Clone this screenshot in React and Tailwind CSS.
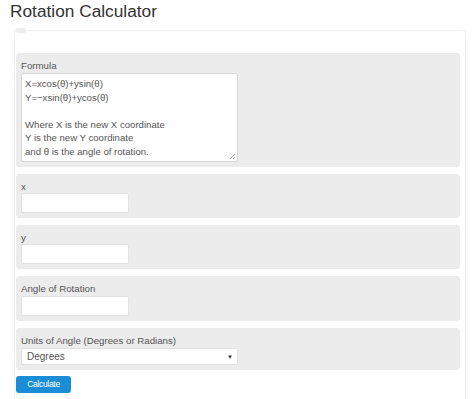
export default function App() {
  const font = { fontFamily: '"Liberation Sans", Arial, sans-serif' };
  const lines = [
    "X=xcos(θ)+ysin(θ)",
    "Y=−xsin(θ)+ycos(θ)",
    "\u00a0",
    "Where X is the new X coordinate",
    "Y is the new Y coordinate",
    "and θ is the angle of rotation.",
  ];
  return (
    <div className="w-[474px] h-[399px] bg-white overflow-hidden" style={font}>
      <h1 className="pl-[10px] text-[17.3px] leading-[23px] text-[#333]">Rotation Calculator</h1>
      <div className="relative ml-[14px] mt-[7px] w-[452px] h-[400px] border border-[#f0f0f0] rounded-[3px] pl-[1px] pr-[5px] pt-[22px]">
        <div className="absolute left-[1px] top-[-3px] w-[10px] h-[5px] rounded-[2px] bg-[#ececec]" />
        <div className="flex flex-col gap-[7px]">
          <div className="bg-[#ececec] rounded-[3px] pt-[6px] pb-[5px] px-[5px] h-[114px]">
            <div className="text-[9.7px] leading-[13px] text-[#555]">Formula</div>
            <div className="relative mt-[1px] w-[217px] h-[89px] bg-white border border-[#d6d6d6] rounded-[2px] pl-[3px] pt-[3px] text-[9.6px] leading-[13.6px] text-[#555]">
              {lines.map((l, i) => (
                <div key={i} className="whitespace-pre">{l}</div>
              ))}
              <svg className="absolute right-[1px] bottom-[1px]" width="7" height="7" viewBox="0 0 7 7">
                <path d="M6 1 L1 6 M6 4 L4 6" stroke="#999" strokeWidth="0.8" />
              </svg>
            </div>
          </div>
          <div className="bg-[#ececec] rounded-[3px] pt-[6px] pb-[5px] px-[5px] h-[44px]">
            <div className="text-[9.7px] leading-[13px] text-[#555]">x</div>
            <input className="block w-[108px] h-[20px] bg-white border border-[#e2e2e2] rounded-[2px] outline-none" />
          </div>
          <div className="bg-[#ececec] rounded-[3px] pt-[6px] pb-[5px] px-[5px] h-[44px]">
            <div className="text-[9.7px] leading-[13px] text-[#555]">y</div>
            <input className="block w-[108px] h-[20px] bg-white border border-[#e2e2e2] rounded-[2px] outline-none" />
          </div>
          <div className="bg-[#ececec] rounded-[3px] pt-[6px] pb-[5px] px-[5px] h-[45px]">
            <div className="text-[9.7px] leading-[13px] text-[#555]">Angle of Rotation</div>
            <input className="block mt-[1px] w-[108px] h-[20px] bg-white border border-[#e2e2e2] rounded-[2px] outline-none" />
          </div>
          <div className="bg-[#ececec] rounded-[3px] pt-[6px] pb-[5px] px-[5px] h-[42px]">
            <div className="text-[9.7px] leading-[13px] text-[#555]">Units of Angle (Degrees or Radians)</div>
            <div className="mt-[1px] flex items-center justify-between w-[217px] h-[17px] bg-white border border-[#e2e2e2] rounded-[2px] pl-[5px] pr-[4px]">
              <span className="text-[10px] leading-[13px] text-[#555]">Degrees</span>
              <span className="text-[6px] leading-none text-[#333]">▼</span>
            </div>
          </div>
        </div>
        <button className="mt-[6px] w-[55px] h-[17px] rounded-[3px] bg-[#1a8dd6] text-white text-[8.5px] leading-[17px] tracking-[-0.3px]" style={font}>
          Calculate
        </button>
      </div>
    </div>
  );
}
